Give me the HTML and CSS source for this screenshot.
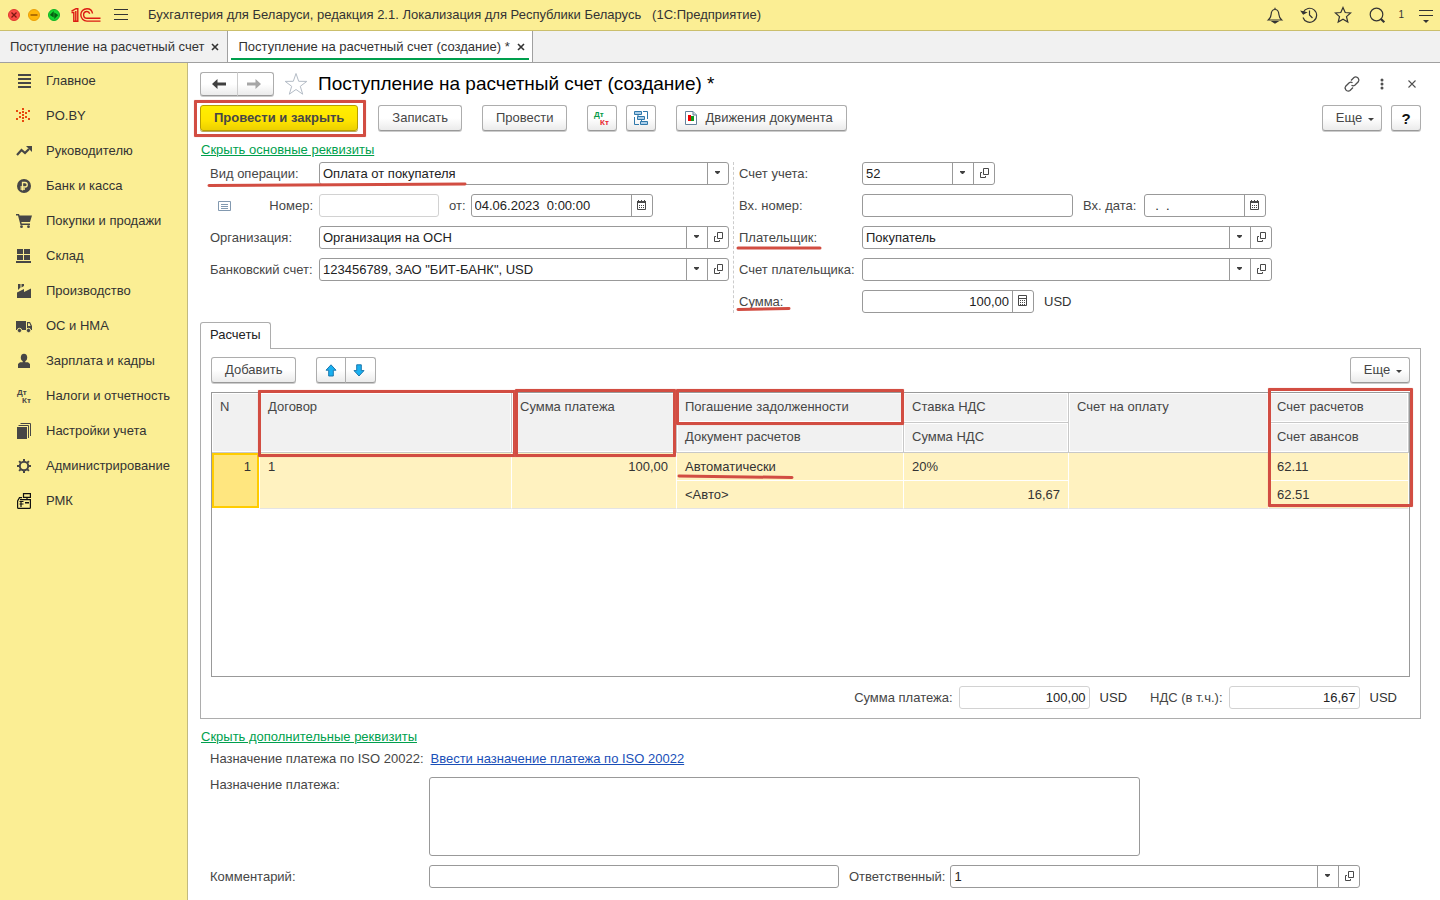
FILE: index.html
```html
<!DOCTYPE html>
<html lang="ru">
<head>
<meta charset="utf-8">
<title>Поступление на расчетный счет (создание)</title>
<link rel="stylesheet" href="styles.css">
</head>
<body>
<svg class="sprite" aria-hidden="true">
  <symbol id="i-down" viewBox="0 0 20 21"><path d="M7 8h5v1l-2 2h-1l-2-2z" fill="#404040"/></symbol>
  <symbol id="i-open" viewBox="0 0 20 21"><path d="M9.500 5.500h5v6h-5zM8 9.500H6.500v5h5V13" fill="none" stroke="#484848"/></symbol>
  <symbol id="i-cal" viewBox="0 0 20 21"><path d="M5.500 6.500h8v8h-8z" fill="none" stroke="#484848"/><path d="M5 6h9v2H5zM6 5h1v1H6zM9 5h1v1H9zM12 5h1v1h-1zM7 10h1v1H7zM9 10h1v1H9zM11 10h1v1h-1zM7 12h1v1H7zM9 12h1v1H9zM11 12h1v1h-1z" fill="#484848"/></symbol>
  <symbol id="i-calc" viewBox="0 0 20 21"><path d="M5.500 4.500h8v10h-8zM5 7.500h9" fill="none" stroke="#484848"/><path d="M7 9h1v1H7zM9 9h1v1H9zM11 9h1v1h-1zM7 11h1v1H7zM9 11h1v1H9zM11 11h1v1h-1zM7 13h1v1H7zM9 13h1v1H9zM11 13h1v1h-1z" fill="#484848"/></symbol>
</svg>
<div class="app">
  <header class="titlebar">
    <div class="winbtns">
      <button class="win" aria-label="Закрыть"><svg width="12" height="12"><circle cx="6" cy="6" r="5.500" fill="#fa4b45" stroke="#dd3830"/><path d="M3.500 3.500l5 5M8.500 3.500l-5 5" stroke="#7c1712" stroke-width="1.300"/></svg></button>
      <button class="win" aria-label="Свернуть"><svg width="12" height="12"><circle cx="6" cy="6" r="5.500" fill="#ffb60a" stroke="#ea9f08"/><path d="M2.500 6h7" stroke="#9a5a00" stroke-width="1.500"/></svg></button>
      <button class="win" aria-label="Развернуть"><svg width="12" height="12"><circle cx="6" cy="6" r="5.500" fill="#19d532" stroke="#0fb325"/><path d="M5.700 2v6.500L1.800 6zM6.300 10V3.500L10.200 6z" fill="#075f12"/></svg></button>
    </div>
    <svg class="logo" width="30" height="16" fill="none" stroke="#dc1a12" stroke-width="1.400"><path d="M.5 5.500h2.300v8.800h4V1.700H5L.5 4.200M4.800 14V4"/><path d="M21.500 6.500C21 3.300 18.500 1.700 16 1.700c-3.700 0-6.200 2.900-6.200 6.100 0 3.500 2.700 6.300 6.200 6.300h13.500"/><path d="M18.700 6.800C18.200 5.200 17.300 4.500 16 4.500c-2 0-3.400 1.500-3.400 3.300 0 2 1.500 3.500 3.400 3.500h13.500"/></svg>
    <button class="bare" aria-label="Меню"><svg width="14" height="12" stroke="#333"><path d="M0 .5h14M0 5.500h14M0 10.500h14"/></svg></button>
    <div class="apptitle">Бухгалтерия для Беларуси, редакция 2.1. Локализация для Республики Беларусь &nbsp; (1С:Предприятие)</div>
    <div class="toptools">
      <button class="bare" aria-label="Уведомления"><svg width="18" height="18" fill="none" stroke="#333" stroke-width="1.200"><path d="M2.300 14h13.400c-2-1.700-2.600-3-2.800-5.500C12.700 5 11.500 3.500 9 3.500S5.300 5 5.100 8.500C4.900 11 4.300 12.300 2.300 14zM9 3.500V1.700"/><path d="M6.700 15.500h4.600L9 17z" fill="#333"/></svg></button>
      <button class="bare" aria-label="История"><svg width="18" height="18" fill="none" stroke="#333" stroke-width="1.200"><path d="M3.200 6.500A7 7 0 1 1 3 11.500M9.500 4.500V9l3 3"/><path d="M1.500 5.500l1.800 2.500 2.700-1.500z" fill="#333"/></svg></button>
      <button class="bare" aria-label="Избранное"><svg width="18" height="18" fill="none" stroke="#333" stroke-width="1.200"><path d="M9 1.500l2.200 5 5.400.5-4.100 3.600 1.300 5.400L9 13.200 4.200 16l1.300-5.400L1.400 7l5.400-.5z"/></svg></button>
      <button class="bare" aria-label="Поиск"><svg width="18" height="18" fill="none" stroke="#333" stroke-width="1.200"><circle cx="8.500" cy="8.500" r="6.300"/><path d="M12.700 12.700l3.600 3.600" stroke-width="2.200"/></svg></button>
      <span class="count">1</span>
      <button class="bare" aria-label="Настройки"><svg width="16" height="18" stroke="#333"><path d="M1 4.500h14M1 9.500h14"/><path d="M5 14h6l-3 3z" fill="#333" stroke="none"/></svg></button>
    </div>
  </header>

  <nav class="tabs">
    <div class="tab"><a href="#list">Поступление на расчетный счет</a><button class="bare" aria-label="Закрыть вкладку"><svg width="8" height="8" stroke="#333" stroke-width="1.600"><path d="M1 1l6 6M7 1L1 7"/></svg></button></div>
    <div class="tab active"><a href="#new">Поступление на расчетный счет (создание) *</a><button class="bare" aria-label="Закрыть вкладку"><svg width="8" height="8" stroke="#333" stroke-width="1.600"><path d="M1 1l6 6M7 1L1 7"/></svg></button></div>
  </nav>

  <div class="body">
    <nav class="side">
      <a href="#1"><svg class="ic"><path d="M2 2h13v2H2zM2 6h13v2H2zM2 10h13v2H2zM2 14h13v2H2z"/></svg>Главное</a>
      <a href="#2"><svg class="ic orange"><path d="M6 1h2v2H6zM6 4h2v2H6zM6 7h2v2H6zM6 10h2v2H6zM6 13h2v2H6zM0 3h2v2H0zM12 3h2v2h-2zM3 5h2v2H3zM9 5h2v2H9zM3 9h2v2H3zM9 9h2v2H9zM0 11h2v2H0zM12 11h2v2h-2z"/></svg>PO.BY</a>
      <a href="#3"><svg class="ic"><path d="M1 13l4.500-5 3.500 3 4-4" fill="none" stroke="#464646" stroke-width="2.200"/><path d="M10 4h6v6z"/></svg>Руководителю</a>
      <a href="#4"><svg class="ic"><circle cx="8" cy="9" r="7"/><path d="M6.500 13.500v-8H9a2.200 2.200 0 0 1 0 4.500H4.500M4.500 12H9" fill="none" stroke="#fbee94" stroke-width="1.300"/></svg>Банк и касса</a>
      <a href="#5"><svg class="ic"><path d="M0 2h3l.6 1.500H16L14 10H5.300l.4 1.500H14V13H4.500L2 3.500H0z"/><circle cx="5.500" cy="14.700" r="1.400"/><circle cx="12.500" cy="14.700" r="1.400"/></svg>Покупки и продажи</a>
      <a href="#6"><svg class="ic"><path d="M1 2h6v5H1zM8 2h6v5H8zM1 8h6v5H1zM8 8h6v5H8zM0 14h15v2H0z"/></svg>Склад</a>
      <a href="#7"><svg class="ic"><path d="M1 16v-5.500L8 7v3l7-3.500V16zM2 2h2.500v3.500L2 8zM5.500 2H8v2L5.500 5.500z"/></svg>Производство</a>
      <a href="#8"><svg class="ic"><path d="M0 4h10v9H0zM11 5h3l2 4v4h-5z"/><path d="M12 6.300h1.500L14.600 9H12z" fill="#fbee94"/><circle cx="3.500" cy="13.500" r="2.200" stroke="#fbee94"/><circle cx="12.500" cy="13.500" r="2.200" stroke="#fbee94"/></svg>ОС и НМА</a>
      <a href="#9"><svg class="ic"><ellipse cx="8" cy="5.500" rx="3.200" ry="3.800"/><path d="M6.700 8h2.600v2.300H12L14 12v4H2v-4l2-1.700h2.700z"/></svg>Зарплата и кадры</a>
      <a href="#10"><svg class="ic dk"><text x="1" y="8">Дт</text><text x="6" y="16">Кт</text></svg>Налоги и отчетность</a>
      <a href="#11"><svg class="ic"><path d="M1 5h10v12H1z"/><path d="M2.500 3.500h10V16M4.500 1.500h10V14" fill="none" stroke="#464646"/></svg>Настройки учета</a>
      <a href="#12"><svg class="ic"><circle cx="8" cy="9" r="4.200" fill="none" stroke="#464646" stroke-width="2"/><path d="M8 2v3M8 13v3M1 9h3M12 9h3M3.100 4.100l2 2M10.900 11.900l2 2M3.100 13.900l2-2M10.900 6.100l2-2" stroke="#464646" stroke-width="2"/></svg>Администрирование</a>
      <a href="#13"><svg class="ic"><g fill="none" stroke="#111" stroke-width="1.200"><path d="M7.500 1.600h6.900v3.800H7.500zM11 5.500v2M6 5.600H3.500L1.600 9v6.400q0 1 1 1h10.800q1 0 1-1V7.600H4"/><path d="M3.500 9.500h4M3.500 12h4M5 9v6"/></g><path d="M9 10h4v1.500H9z" fill="#111"/></svg>РМК</a>
    </nav>

    <main class="main">
      <div class="head">
        <div class="split nav">
          <button class="btn" aria-label="Назад"><svg width="14" height="12"><path d="M0 6l5.500-5v3.600H14v2.800H5.500V11z" fill="#404040"/></svg></button>
          <button class="btn" aria-label="Вперед"><svg width="14" height="12"><path d="M14 6L8.500 1v3.600H0v2.800h8.500V11z" fill="#a6a6a6"/></svg></button>
        </div>
        <button class="bare fav" aria-label="В избранное"><svg width="24" height="24"><path d="M12 1.500l2.700 7.800 8.100.1-6.500 4.900 2.400 7.900L12 17.500l-6.700 4.700 2.400-7.900L1.200 9.400l8.100-.1z" fill="none" stroke="#b4bcc6"/></svg></button>
        <h1>Поступление на расчетный счет (создание) *</h1>
        <div class="headtools">
          <button class="bare" aria-label="Ссылка"><svg width="18" height="18" fill="none" stroke="#505050" stroke-width="1.300"><path d="M8 5.500l3-3q1.500-1.300 3.500 0l.8.800q1.300 1.800 0 3.500l-3.500 3.500q-1.600 1.300-3.300 0M10 12.500l-3 3q-1.500 1.300-3.500 0l-.8-.8q-1.300-1.800 0-3.500l3.500-3.500q1.600-1.300 3.300 0"/></svg></button>
          <button class="bare" aria-label="Действия"><svg width="12" height="12" fill="#505050"><circle cx="6" cy="2" r="1.500"/><circle cx="6" cy="6" r="1.500"/><circle cx="6" cy="10" r="1.500"/></svg></button>
          <button class="bare" aria-label="Закрыть форму"><svg width="18" height="8" stroke="#505050" stroke-width="1.100"><path d="M5.500.500l7 7M12.500.500l-7 7"/></svg></button>
        </div>
      </div>

      <div class="cmds">
        <div class="marked"><button class="btn primary">Провести и закрыть</button><span class="box box-btn"></span></div>
        <button class="btn">Записать</button>
        <button class="btn">Провести</button>
        <div class="pair">
          <button class="btn icon" aria-label="Дт Кт"><svg class="dk" width="18" height="18"><text x="1" y="8" fill="#089a49">Дт</text><text x="7" y="16" fill="#e8252b">Кт</text></svg></button>
          <button class="btn icon" aria-label="Структура"><svg width="16" height="16"><g fill="#a9cde8" stroke="#2f78ab"><path d="M1.500 1.500h7v3h-7zM4.500 6.500h7v3h-7zM7.500 11.500h7v3h-7z"/></g><path d="M10 1.500h4.500V9M1.500 7v7.500H6M5 5v1.500M8.500 10v1.500" fill="none" stroke="#2f78ab"/></svg></button>
        </div>
        <button class="btn"><svg class="lead" width="14" height="14"><path d="M1.500.500H9L12.500 4v9.500h-11z" fill="#fff" stroke="#64829b"/><path d="M9 .500V4h3.500" fill="#cfdae4" stroke="#64829b"/><path d="M4 4h3v6H4z" fill="#f00000"/><path d="M7 5h3v5H7z" fill="#0a9a1c"/></svg>Движения документа</button>
        <span class="grow"></span>
        <div class="pair"><button class="btn more">Еще<svg width="6" height="4"><path d="M0 0h6L3 3z" fill="#404040"/></svg></button><button class="btn icon help">?</button></div>
      </div>

      <a class="fold" href="#main">Скрыть основные реквизиты</a>

      <div class="form">
        <div class="col left">
          <div class="row marked">
            <label for="op">Вид операции:</label>
            <div class="field fill"><select id="op"><option>Оплата от покупателя</option></select><span class="fb"><svg><use href="#i-down"/></svg></span></div>
            <svg class="mark mark-op" width="262" height="6"><path d="M2 3.500L258 2"/></svg>
          </div>
          <div class="row">
            <label class="num" for="no"><svg width="13" height="10" fill="none" stroke="#8299b0"><path d="M.5.500h12v9H.5zM3 3.500h7M3 5.500h7M3 7.500h7"/></svg>Номер:</label>
            <div class="field soft w-no"><input id="no"></div>
            <label class="mid" for="dt">от:</label>
            <div class="field w-dt"><input id="dt" value="04.06.2023&nbsp; 0:00:00"><button class="fb" aria-label="Календарь"><svg><use href="#i-cal"/></svg></button></div>
          </div>
          <div class="row">
            <label for="org">Организация:</label>
            <div class="field fill"><input id="org" value="Организация на ОСН"><button class="fb" aria-label="Выбрать"><svg><use href="#i-down"/></svg></button><button class="fb" aria-label="Открыть"><svg><use href="#i-open"/></svg></button></div>
          </div>
          <div class="row">
            <label for="bank">Банковский счет:</label>
            <div class="field fill"><input id="bank" value="123456789, ЗАО &quot;БИТ-БАНК&quot;, USD"><button class="fb" aria-label="Выбрать"><svg><use href="#i-down"/></svg></button><button class="fb" aria-label="Открыть"><svg><use href="#i-open"/></svg></button></div>
          </div>
        </div>
        <div class="col right">
          <div class="row">
            <label for="acc">Счет учета:</label>
            <div class="field w-acc"><input id="acc" value="52"><button class="fb" aria-label="Выбрать"><svg><use href="#i-down"/></svg></button><button class="fb" aria-label="Открыть"><svg><use href="#i-open"/></svg></button></div>
          </div>
          <div class="row">
            <label for="inno">Вх. номер:</label>
            <div class="field w-in"><input id="inno"></div>
            <label class="mid w-mid" for="indt">Вх. дата:</label>
            <div class="field w-indt"><input id="indt" value="&nbsp; .&nbsp; ."><button class="fb" aria-label="Календарь"><svg><use href="#i-cal"/></svg></button></div>
          </div>
          <div class="row marked">
            <label for="payer">Плательщик:</label>
            <div class="field wide"><input id="payer" value="Покупатель"><button class="fb" aria-label="Выбрать"><svg><use href="#i-down"/></svg></button><button class="fb" aria-label="Открыть"><svg><use href="#i-open"/></svg></button></div>
            <svg class="mark mark-payer" width="87" height="6"><path d="M2 3h82"/></svg>
          </div>
          <div class="row">
            <label for="pacc">Счет плательщика:</label>
            <div class="field wide"><input id="pacc"><button class="fb" aria-label="Выбрать"><svg><use href="#i-down"/></svg></button><button class="fb" aria-label="Открыть"><svg><use href="#i-open"/></svg></button></div>
          </div>
          <div class="row marked">
            <label for="sum">Сумма:</label>
            <div class="field w-sum"><input class="r" id="sum" value="100,00"><button class="fb" aria-label="Калькулятор"><svg><use href="#i-calc"/></svg></button></div>
            <span class="cur">USD</span>
            <svg class="mark mark-sum" width="56" height="6"><path d="M2 3.500L53 2.500"/></svg>
          </div>
        </div>
      </div>

      <div class="ptabs"><button class="ptab">Расчеты</button></div>
      <section class="panel">
        <div class="cmds">
          <button class="btn">Добавить</button>
          <div class="split"><button class="btn icon" aria-label="Вверх"><svg width="12" height="13"><path d="M6 .800l5 5.400H8.300V12H3.700V6.200H1z" fill="#19b0f0" stroke="#1d78ad"/></svg></button><button class="btn icon" aria-label="Вниз"><svg width="12" height="13"><path d="M6 12l5-5.400H8.300V.800H3.700v5.800H1z" fill="#19b0f0" stroke="#1d78ad"/></svg></button></div>
          <span class="grow"></span>
          <button class="btn more">Еще<svg width="6" height="4"><path d="M0 0h6L3 3z" fill="#404040"/></svg></button>
        </div>
        <div class="grid">
          <table>
            <colgroup><col class="c1"><col class="c2"><col class="c3"><col class="c4"><col class="c3"><col class="c5"><col class="c6"></colgroup>
            <thead>
              <tr><th rowspan="2">N</th><th rowspan="2">Договор<span class="box box-contract"></span></th><th rowspan="2">Сумма платежа<span class="box box-sum"></span></th><th>Погашение задолженности<span class="box box-debt"></span></th><th>Ставка НДС</th><th rowspan="2">Счет на оплату</th><th>Счет расчетов<span class="box box-acc"></span></th></tr>
              <tr><th>Документ расчетов</th><th>Сумма НДС</th><th>Счет авансов</th></tr>
            </thead>
            <tbody>
              <tr><td class="r cur-cell" rowspan="2">1</td><td class="end" rowspan="2">1</td><td class="r end" rowspan="2">100,00</td><td>Автоматически<svg class="mark mark-auto" width="118" height="6"><path d="M2 2l113 1.500"/></svg></td><td>20%</td><td class="end" rowspan="2"></td><td>62.11</td></tr>
              <tr><td class="end">&lt;Авто&gt;</td><td class="r end">16,67</td><td class="end">62.51</td></tr>
            </tbody>
          </table>
        </div>
        <div class="totals">
          <label for="t1">Сумма платежа:</label><div class="field soft w-tot"><input class="r" id="t1" value="100,00" readonly></div><span class="cur">USD</span>
          <label class="vat" for="t2">НДС (в т.ч.):</label><div class="field soft w-tot"><input class="r" id="t2" value="16,67" readonly></div><span class="cur">USD</span>
        </div>
      </section>

      <a class="fold extra" href="#extra">Скрыть дополнительные реквизиты</a>
      <div class="iso"><span>Назначение платежа по ISO 20022:</span><a href="#iso">Ввести назначение платежа по ISO 20022</a></div>
      <div class="row bottom"><label for="purpose">Назначение платежа:</label><textarea id="purpose"></textarea></div>
      <div class="row bottom last">
        <label for="comment">Комментарий:</label>
        <div class="field wide"><input id="comment"></div>
        <label class="mid" for="resp">Ответственный:</label>
        <div class="field wide"><input id="resp" value="1"><button class="fb" aria-label="Выбрать"><svg><use href="#i-down"/></svg></button><button class="fb" aria-label="Открыть"><svg><use href="#i-open"/></svg></button></div>
      </div>
    </main>
  </div>
</div>
</body>
</html>
```

FILE: styles.css
```css
* { box-sizing: border-box; }
body { margin: 0; background: #fff; color: #464646; }
body, button, input, select, textarea { font: 13px/15px "Liberation Sans", Arial, sans-serif; }
button { padding: 0; margin: 0; color: inherit; cursor: pointer; }
svg { display: block; flex: none; }
.sprite { position: absolute; width: 0; height: 0; }
.bare, .win { border: 0; background: none; display: flex; }
.grow { flex: 1; }
.r { text-align: right; }

.app { min-height: 100vh; display: flex; flex-direction: column; }

/* Title bar */
.titlebar { display: flex; align-items: center; height: 31px; padding: 0 6px 1px 8px; background: #fbee94; border-bottom: 1px solid #cbbf6c; color: #333; }
.winbtns { display: flex; gap: 8px; }
.logo { margin: 0 13px 0 11px; }
.apptitle { flex: 1; margin-left: 20px; white-space: nowrap; }
.toptools { display: flex; align-items: center; gap: 16px; }
.toptools .count { font-size: 10px; margin-left: -4px; margin-right: -2px; }

/* Open windows */
.tabs { display: flex; height: 32px; background: #f1f1f1; border-bottom: 1px solid #a0a0a0; }
.tab { position: relative; display: flex; align-items: center; gap: 7px; padding: 0 8px 0 10px; border-right: 1px solid #a0a0a0; color: #333; }
.tab a { color: inherit; text-decoration: none; white-space: nowrap; }
.tab.active { padding-right: 7px; background: #fff; }
.tab.active::after { content: ""; position: absolute; left: 3px; right: 3px; bottom: 2px; height: 2px; background: #009f4d; }

.body { flex: 1; display: flex; }
.side { flex: none; width: 188px; background: #fbee94; border-right: 1px solid #c3ba7e; }
.side a { display: flex; align-items: center; gap: 13px; height: 35px; padding-left: 16px; color: #333; text-decoration: none; white-space: nowrap; }
.ic { width: 17px; height: 17px; fill: #464646; overflow: visible; }
.ic.orange { fill: #e8490f; }
.dk { font-size: 8px; font-weight: bold; }

/* Form */
.main { flex: 1; min-width: 0; display: flex; flex-direction: column; padding: 8px 19px 12px 12px; }
.head { display: flex; align-items: center; height: 25px; }
.btn { display: flex; align-items: center; justify-content: center; height: 26px; padding: 0 13px 1px; border: 1px solid #adadad; border-bottom-color: #999; border-radius: 3px; background: linear-gradient(#fff 50%, #ebebeb); box-shadow: 0 1px 0 #ccc; white-space: nowrap; }
.btn.primary { background: linear-gradient(#ffef00, #ffe400 60%, #ecd000); border-color: #b89f00; box-shadow: 0 1px 0 #b9a85a; font-weight: bold; }
.btn.icon { width: 30px; padding: 0; }
.btn.more { width: 60px; gap: 6px; padding: 0 0 1px 6px; }
.btn.more svg { margin-top: 5px; }
.btn.help { font-size: 15px; font-weight: bold; color: #111; }
.lead { margin: 0 7px 0 -6px; }
.split { display: flex; }
.split .btn:first-child { border-radius: 3px 0 0 3px; }
.split .btn:last-child { border-radius: 0 3px 3px 0; margin-left: -1px; width: 31px; padding-right: 3px; }
.nav .btn { width: 38px; height: 24px; padding: 0; border-right-color: #ccc; }
.nav .btn:last-child { width: 37px; border-color: #adadad #adadad #999 #ccc; }
.fav { margin: 0 10px; }
h1 { flex: 1; margin: 0; font-size: 19px; line-height: 24px; font-weight: normal; color: #000; white-space: nowrap; }
.headtools { display: flex; align-items: center; gap: 15px; }
.cmds { display: flex; gap: 20px; margin: 9px 0 11px; }
.pair { display: flex; gap: 9px; }
.fold { align-self: flex-start; margin-left: 1px; line-height: 16px; color: #009f4d; }

.form { display: grid; grid-template-columns: 533fr 688fr; margin-top: 4px; }
.col { display: flex; flex-direction: column; gap: 9px; }
.left { padding: 0 4px 0 10px; }
.right { padding-left: 5px; border-left: 1px dashed #ccc; }
.row { display: flex; align-items: center; }
.row > label { flex: none; white-space: nowrap; }
.left .row > label:first-child { width: 109px; }
.right .row > label:first-child { width: 123px; }
.row > label.mid { margin: 0 5px 0 10px; }
.w-mid { width: 56px; }
.num { display: flex; align-items: center; justify-content: space-between; padding: 0 6px 0 8px; }
.field { display: flex; height: 23px; border: 1px solid #999; border-radius: 3px; background: #fff; color: #222; }
.field.soft { border-color: #d2d2d2; }
.field input, .field select { flex: 1; width: 0; min-width: 0; padding: 0 3px; border: 0; outline: 0; background: none; color: inherit; appearance: none; }
.fb { flex: none; width: 21px; padding: 0; border: 0; border-left: 1px solid #999; background: none; }
.fb svg { width: 20px; height: 21px; }
.fill { flex: 1; }
.wide { flex: 0 1 410px; }
.w-no { width: 120px; }
.w-dt { width: 182px; }
.w-acc { width: 133px; }
.w-in { width: 211px; }
.w-indt { width: 122px; }
.w-sum { width: 172px; }
.w-tot { width: 131px; }
.cur { margin-left: 10px; color: #333; }

/* Tab page with the table part */
.ptabs { display: flex; margin-top: 9px; }
.ptab { position: relative; z-index: 1; height: 27px; margin-bottom: -1px; padding: 0 9px 3px; border: 1px solid #adadad; border-bottom: 0; border-radius: 3px 3px 0 0; background: #fff; color: #222; }
.panel { flex: 1; display: flex; flex-direction: column; padding: 0 10px 9px; border: 1px solid #adadad; }
.panel .cmds { margin: 8px 0 9px; }
.grid { flex: 1; border: 1px solid #999; }
table { width: 100%; table-layout: fixed; border-spacing: 0; }
.c1 { width: 48px; }
.c2 { width: 252px; }
.c3 { width: 165px; }
.c4 { width: 227px; }
.c5 { width: 200px; }
.c6 { width: 140px; }
th, td { position: relative; padding: 6px 8px 0; vertical-align: top; text-align: left; white-space: nowrap; }
th { height: 30px; font-weight: normal; background: #f1f1f1; border-right: 1px solid #c8c8c8; border-bottom: 1px solid #c8c8c8; box-shadow: inset 0 0 0 1px #fff; }
td { height: 28px; color: #333; background: #fff2c0; border-right: 1px solid #fff; border-bottom: 1px solid #fff; }
td.r { text-align: right; }
td.end { border-bottom-color: #e4e4e4; }
.cur-cell { background: #ffe67f; box-shadow: inset 0 0 0 2px #fc0; }
.totals { display: flex; align-items: center; justify-content: flex-end; margin-top: 9px; padding-right: 13px; }
.totals label { margin-right: 6px; }
.totals .vat { margin-left: 23px; }

/* Additional details */
.extra { margin-top: 10px; }
.iso { display: flex; gap: 7px; margin: 6px 0 0 10px; }
.iso a { color: #1a4fb8; }
.bottom { margin: 11px 0 0 10px; }
.bottom > label:first-child { width: 219px; align-self: flex-start; }
.bottom.last { margin-top: 9px; }
.bottom.last > label:first-child { align-self: center; }
textarea { flex: 0 1 711px; height: 79px; border: 1px solid #999; border-radius: 3px; resize: none; }

/* Red pen marks */
.marked { position: relative; }
.box { position: absolute; z-index: 2; border: 3px solid #d24d42; border-radius: 1px; box-shadow: 0 0 1px #e58b84; pointer-events: none; }
.box-btn { inset: -5px -8px -6px -6px; }
.box-contract { inset: -3px -5px -5px -2px; }
.box-sum { inset: -4px 0 -5px 3px; }
.box-debt { inset: -4px -1px -3px -1px; }
.box-acc { inset: -5px -5px -85px -1px; }
.mark { position: absolute; z-index: 2; fill: none; stroke: #d24d42; stroke-width: 3; stroke-linecap: round; pointer-events: none; }
.mark-op { left: -3px; top: 20px; }
.mark-payer { left: -3px; top: 19px; }
.mark-sum { left: -3px; top: 16px; }
.mark-auto { left: 0; top: 21px; }
```
